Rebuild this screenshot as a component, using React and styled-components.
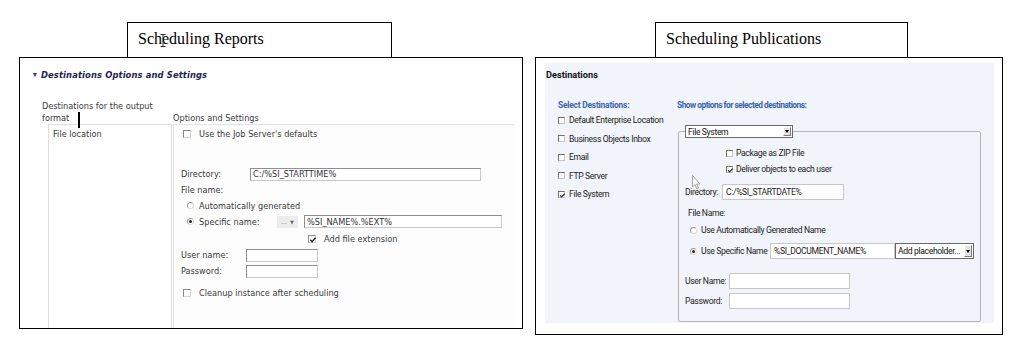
import React from "react";
import styled, { createGlobalStyle } from "styled-components";

const GlobalStyle = createGlobalStyle`
  html, body {
    margin: 0;
    padding: 0;
    background: #ffffff;
  }
  body {
    width: 1015px;
    height: 350px;
    overflow: hidden;
  }
`;

const verdana = `"DejaVu Sans", Verdana, sans-serif`;
const tahoma = `Roboto, "Liberation Sans", Arial, sans-serif`;

const Page = styled.div`
  display: flex;
  align-items: flex-start;
  gap: 12px;
  padding: 22px 0 0 19px;
`;

const Figure = styled.div`
  display: flex;
  flex-direction: column;
  width: ${(p) => p.$width}px;
`;

const TitleTab = styled.div`
  position: relative;
  box-sizing: border-box;
  width: ${(p) => p.$width}px;
  height: 36px;
  margin-left: ${(p) => p.$offset}px;
  margin-bottom: -1px;
  padding: 7px 0 0 10px;
  border: 1px solid #000;
  border-bottom: none;
  font-family: "Liberation Serif", "Times New Roman", serif;
  font-size: 16px;
  line-height: 18px;
  color: #000;
`;

const Panel = styled.div`
  position: relative;
  box-sizing: border-box;
  height: ${(p) => p.$height}px;
  border: 1px solid #000;
  display: flex;
  flex-direction: column;
`;

/* ---------- left: Scheduling Reports ---------- */

const ReportBody = styled.div`
  display: flex;
  flex-direction: column;
  flex: 1;
  padding: 11px 8px 0 13px;
  font-family: ${verdana};
  font-size: 8.2px;
  color: #3a3a3a;
`;

const SectionHeader = styled.div`
  display: flex;
  align-items: center;
  gap: 3px;
  height: 11px;
  font-size: 8.4px;
  font-weight: bold;
  font-style: italic;
  letter-spacing: 0.12px;
  color: #1d2450;
`;

const Triangle = styled.span`
  width: 0;
  height: 0;
  border-left: 2.5px solid transparent;
  border-right: 2.5px solid transparent;
  border-top: 4px solid #2b3a7a;
  margin-right: 1px;
`;

const ColumnHeads = styled.div`
  display: flex;
  align-items: flex-end;
  margin-top: 20px;
  line-height: 12px;
`;

const HeadCell = styled.div`
  width: ${(p) => p.$width}px;
  padding-left: ${(p) => p.$indent || 0}px;
`;

const Table = styled.div`
  display: flex;
  flex: 1;
  margin-left: 15px;
`;

const NameCell = styled.div`
  box-sizing: border-box;
  width: 124px;
  padding: 4px 0 0 4px;
  border: 1px solid #dedede;
  border-bottom: none;
  line-height: 10px;
`;

const OptionsCell = styled.div`
  flex: 1;
  display: flex;
  flex-direction: column;
  margin-left: 1px;
  padding-left: 7px;
  border-top: 1px solid #e2e2e2;
  border-left: 1px solid #dedede;
  background: #fdfdfd;
`;

const FormRow = styled.div`
  display: flex;
  align-items: center;
  height: ${(p) => p.$h}px;
  margin-top: ${(p) => p.$top || 0}px;
  padding-left: ${(p) => p.$indent || 0}px;
`;

const Label = styled.span`
  display: inline-block;
  width: ${(p) => (p.$width ? `${p.$width}px` : "auto")};
  flex-shrink: 0;
  white-space: nowrap;
`;

const ClassicBox = styled.span`
  position: relative;
  box-sizing: border-box;
  width: 8px;
  height: 8px;
  flex-shrink: 0;
  margin-right: 8px;
  border: 1px solid #8a8a8a;
  border-right-color: #d4d4d4;
  border-bottom-color: #d4d4d4;
  background: #fff;
`;

const Radio = styled.span`
  position: relative;
  box-sizing: border-box;
  width: ${(p) => p.$size}px;
  height: ${(p) => p.$size}px;
  flex-shrink: 0;
  margin-right: ${(p) => p.$gap}px;
  border-radius: 50%;
  border: 1px solid #9a9a9a;
  border-right-color: #dcdcdc;
  border-bottom-color: #dcdcdc;
  background: #fff;
  &::after {
    content: "";
    display: ${(p) => (p.$on ? "block" : "none")};
    position: absolute;
    left: 50%;
    top: 50%;
    width: 3px;
    height: 3px;
    margin: -1.5px 0 0 -1.5px;
    border-radius: 50%;
    background: #222;
  }
`;

const Tick = ({ size }) => (
  <svg
    width={size}
    height={size}
    viewBox="0 0 8 8"
    style={{ position: "absolute", left: 0, top: 0 }}
  >
    <path d="M1.3 3.8 L3 5.6 L6.5 1.8" fill="none" stroke="#222" strokeWidth="1.4" />
  </svg>
);

const ReportInput = styled.span`
  box-sizing: border-box;
  display: flex;
  align-items: center;
  width: ${(p) => p.$width}px;
  height: 13px;
  padding-left: 2px;
  border: 1px solid #8e8e8e;
  border-right-color: #c9c9c9;
  border-bottom-color: #c9c9c9;
  background: #fff;
  color: #333;
  white-space: nowrap;
`;

const MiniDrop = styled.span`
  display: flex;
  align-items: center;
  justify-content: center;
  gap: 3px;
  width: 21px;
  height: 12px;
  margin-right: 6px;
  background: #ececec;
  color: #666;
  font-size: 6px;
`;

const TextCaret = styled.span`
  position: absolute;
  left: 58px;
  top: 54px;
  width: 2px;
  height: 16px;
  background: #000;
`;

const IBeam = styled.svg`
  position: absolute;
  left: 32px;
  top: 11px;
`;

/* ---------- right: Scheduling Publications ---------- */

const PubArea = styled.div`
  flex: 1;
  display: flex;
  flex-direction: column;
  margin: 5px 8px 11px 9px;
  background: #f1f4fa;
  font-family: ${tahoma};
  font-size: 8.6px;
  letter-spacing: -0.35px;
  color: #222;
`;

const PubTitle = styled.div`
  margin: 6px 0 0 1px;
  height: 12px;
  line-height: 12px;
  font-size: 9.2px;
  font-weight: bold;
  letter-spacing: 0;
  color: #111;
`;

const PubColumns = styled.div`
  display: flex;
  margin-top: 18px;
`;

const DestList = styled.div`
  display: flex;
  flex-direction: column;
  box-sizing: border-box;
  width: 132px;
  padding-left: 13px;
`;

const BlueHead = styled.div`
  height: 12px;
  line-height: 12px;
  font-size: 8.4px;
  font-weight: bold;
  letter-spacing: ${(p) => p.$spacing}px;
  color: #3b63ad;
  white-space: nowrap;
`;

const DestRow = styled.div`
  display: flex;
  align-items: center;
  height: 18.5px;
  white-space: nowrap;
  &:first-of-type {
    margin-top: 4px;
  }
`;

const XpBox = styled.span`
  position: relative;
  box-sizing: border-box;
  width: 7px;
  height: 7px;
  flex-shrink: 0;
  margin-right: ${(p) => p.$gap}px;
  border: 1px solid #6f6f6f;
  border-right-color: #c4c4c4;
  border-bottom-color: #c4c4c4;
  background: #fff;
`;

const OptionsColumn = styled.div`
  display: flex;
  flex-direction: column;
  width: 304px;
`;

const GroupBox = styled.fieldset`
  box-sizing: border-box;
  display: flex;
  flex-direction: column;
  height: 197px;
  margin: 14px 0 0 1px;
  padding: 0;
  border: 1px solid #b5b5b5;
  border-radius: 2px;
`;

const GroupLegend = styled.legend`
  margin-left: 6px;
  padding: 0;
`;

const XpSelect = styled.span`
  box-sizing: border-box;
  display: flex;
  align-items: center;
  width: ${(p) => p.$width}px;
  height: ${(p) => p.$h}px;
  padding-left: 2px;
  border: 1px solid #6a6a6a;
  background: #fff;
  color: #111;
  white-space: nowrap;
  overflow: hidden;
`;

const SelectText = styled.span`
  flex: 1;
  overflow: hidden;
`;

const ArrowButton = styled.span`
  display: flex;
  align-items: center;
  justify-content: center;
  flex-shrink: 0;
  width: 8px;
  height: calc(100% - 2px);
  margin-right: 1px;
  background: #e3e3e3;
  border: 1px solid #fff;
  border-right-color: #7d7d7d;
  border-bottom-color: #7d7d7d;
  box-sizing: border-box;
  &::after {
    content: "";
    border-left: 2px solid transparent;
    border-right: 2px solid transparent;
    border-top: 3px solid #000;
  }
`;

const PubRow = styled.div`
  display: flex;
  align-items: center;
  height: 16px;
  margin-top: ${(p) => p.$top || 0}px;
  padding-left: ${(p) => p.$indent || 0}px;
  white-space: nowrap;
`;

const PubInput = styled.span`
  box-sizing: border-box;
  display: flex;
  align-items: center;
  flex-shrink: 0;
  width: ${(p) => p.$width}px;
  height: 16px;
  padding-left: 3px;
  border: 1px solid #c8c8c8;
  background: #fff;
  color: #222;
  white-space: nowrap;
`;

const ArrowCursor = styled.svg`
  position: absolute;
  left: 156px;
  top: 117px;
`;

const destinations = [
  { label: "Default Enterprise Location", on: false },
  { label: "Business Objects Inbox", on: false },
  { label: "Email", on: false },
  { label: "FTP Server", on: false },
  { label: "File System", on: true },
];

function ReportsFigure() {
  return (
    <Figure $width={504}>
      <TitleTab $width={265} $offset={108}>
        Scheduling Reports
        <IBeam width="6" height="13" viewBox="0 0 6 13">
          <path d="M0.5 0.5 H5.5 M3 0.5 V12.5 M0.5 12.5 H5.5" stroke="#333" strokeWidth="1" fill="none" />
        </IBeam>
      </TitleTab>
      <Panel $height={272}>
        <ReportBody>
          <SectionHeader>
            <Triangle />
            Destinations Options and Settings
          </SectionHeader>
          <ColumnHeads>
            <HeadCell $width={131} $indent={9}>
              Destinations for the output
              <br />
              format
            </HeadCell>
            <HeadCell>Options and Settings</HeadCell>
          </ColumnHeads>
          <Table>
            <NameCell>File location</NameCell>
            <OptionsCell>
              <FormRow $h={16} $top={1} $indent={2}>
                <ClassicBox />
                Use the Job Server's defaults
              </FormRow>
              <FormRow $h={16} $top={24}>
                <Label $width={69}>Directory:</Label>
                <ReportInput $width={231}>C:/%SI_STARTTIME%</ReportInput>
              </FormRow>
              <FormRow $h={16}>File name:</FormRow>
              <FormRow $h={15} $indent={6}>
                <Radio $size={7} $gap={5} />
                Automatically generated
              </FormRow>
              <FormRow $h={17} $indent={6}>
                <Radio $size={7} $gap={5} $on />
                <Label $width={78}>Specific name:</Label>
                <MiniDrop>
                  ...
                  <span style={{ fontSize: 5 }}>▼</span>
                </MiniDrop>
                <ReportInput $width={198}>%SI_NAME%.%EXT%</ReportInput>
              </FormRow>
              <FormRow $h={17} $indent={127}>
                <ClassicBox>
                  <Tick size={8} />
                </ClassicBox>
                Add file extension
              </FormRow>
              <FormRow $h={16}>
                <Label $width={65}>User name:</Label>
                <ReportInput $width={72} />
              </FormRow>
              <FormRow $h={16}>
                <Label $width={65}>Password:</Label>
                <ReportInput $width={72} />
              </FormRow>
              <FormRow $h={16} $top={6} $indent={2}>
                <ClassicBox />
                Cleanup instance after scheduling
              </FormRow>
            </OptionsCell>
          </Table>
        </ReportBody>
        <TextCaret />
      </Panel>
    </Figure>
  );
}

function PublicationsFigure() {
  return (
    <Figure $width={468}>
      <TitleTab $width={253} $offset={120}>
        Scheduling Publications
      </TitleTab>
      <Panel $height={278}>
        <PubArea>
          <PubTitle>Destinations</PubTitle>
          <PubColumns>
            <DestList>
              <BlueHead $spacing={-0.2}>Select Destinations:</BlueHead>
              {destinations.map((d) => (
                <DestRow key={d.label}>
                  <XpBox $gap={4}>{d.on && <Tick size={7} />}</XpBox>
                  {d.label}
                </DestRow>
              ))}
            </DestList>
            <OptionsColumn>
              <BlueHead $spacing={-0.5}>Show options for selected destinations:</BlueHead>
              <GroupBox>
                <GroupLegend>
                  <XpSelect $width={108} $h={13}>
                    <SelectText>File System</SelectText>
                    <ArrowButton />
                  </XpSelect>
                </GroupLegend>
                <PubRow $top={7} $indent={47}>
                  <XpBox $gap={3} />
                  Package as ZIP File
                </PubRow>
                <PubRow $indent={47}>
                  <XpBox $gap={3}>
                    <Tick size={7} />
                  </XpBox>
                  Deliver objects to each user
                </PubRow>
                <PubRow $top={7} $indent={6}>
                  <Label $width={37}>Directory:</Label>
                  <PubInput $width={122}>C:/%SI_STARTDATE%</PubInput>
                </PubRow>
                <PubRow $top={5} $indent={9}>
                  File Name:
                </PubRow>
                <PubRow $top={1} $indent={11}>
                  <Radio $size={7} $gap={4} />
                  Use Automatically Generated Name
                </PubRow>
                <PubRow $top={5} $indent={11}>
                  <Radio $size={7} $gap={4} $on />
                  <Label $width={69}>Use Specific Name</Label>
                  <PubInput $width={125}>%SI_DOCUMENT_NAME%</PubInput>
                  <XpSelect $width={79} $h={16}>
                    <SelectText>Add placeholder...</SelectText>
                    <ArrowButton />
                  </XpSelect>
                </PubRow>
                <PubRow $top={14} $indent={6}>
                  <Label $width={44}>User Name:</Label>
                  <PubInput $width={121} />
                </PubRow>
                <PubRow $top={4} $indent={6}>
                  <Label $width={44}>Password:</Label>
                  <PubInput $width={121} />
                </PubRow>
              </GroupBox>
            </OptionsColumn>
          </PubColumns>
        </PubArea>
        <ArrowCursor width="9" height="15" viewBox="0 0 9 15">
          <path d="M0.5 0.5 V12 L3 9.5 L5 14 L6.5 13.3 L4.6 9 L8 9 Z" fill="#fff" stroke="#9a9a9a" strokeWidth="0.9" />
        </ArrowCursor>
      </Panel>
    </Figure>
  );
}

export default function App() {
  return (
    <>
      <GlobalStyle />
      <Page>
        <ReportsFigure />
        <PublicationsFigure />
      </Page>
    </>
  );
}
